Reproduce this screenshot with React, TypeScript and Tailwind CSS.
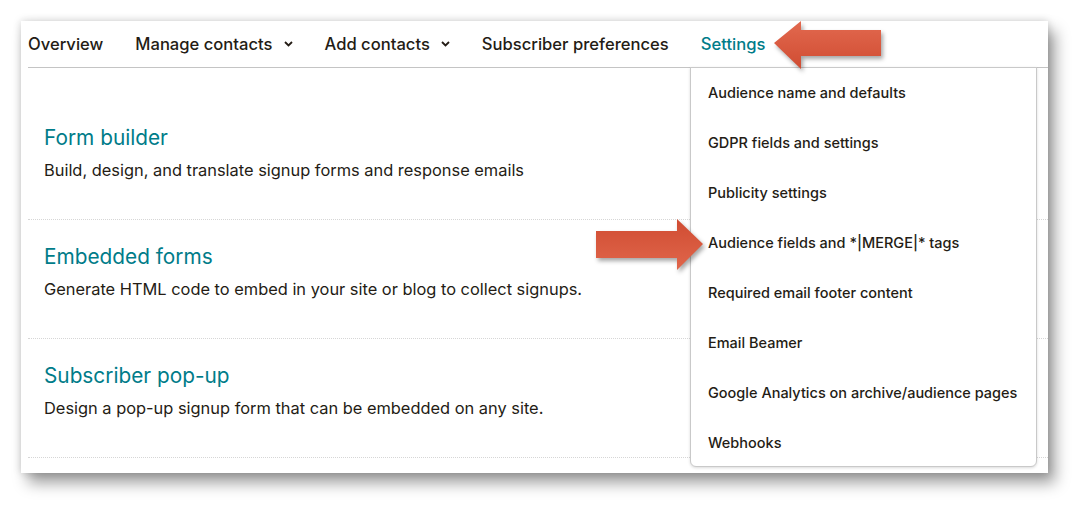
import React from 'react'

const font = { fontFamily: 'Inter, "Noto Sans", sans-serif' }

const menu = [
  'Audience name and defaults',
  'GDPR fields and settings',
  'Publicity settings',
  'Audience fields and *|MERGE|* tags',
  'Required email footer content',
  'Email Beamer',
  'Google Analytics on archive/audience pages',
  'Webhooks',
]

const sections = [
  {
    title: 'Form builder',
    text: 'Build, design, and translate signup forms and response emails',
  },
  {
    title: 'Embedded forms',
    text: 'Generate HTML code to embed in your site or blog to collect signups.',
  },
  {
    title: 'Subscriber pop-up',
    text: 'Design a pop-up signup form that can be embedded on any site.',
  },
]

function Chevron() {
  return (
    <svg width="9" height="6" viewBox="0 0 9 6" className="ml-[11px] mt-[1px]">
      <path d="M1 1l3.5 3.5L8 1" fill="none" stroke="#241c15" strokeWidth="1.8" />
    </svg>
  )
}

function LeftArrow() {
  return (
    <svg
      width="112"
      height="54"
      viewBox="0 0 112 54"
      className="absolute left-[753px] top-0 drop-shadow-[2px_3px_2px_rgba(0,0,0,0.35)]"
    >
      <defs>
        <linearGradient id="ga" x1="0" y1="0" x2="0" y2="1">
          <stop offset="0" stopColor="#e2694f" />
          <stop offset="1" stopColor="#d04c32" />
        </linearGradient>
      </defs>
      <polygon points="0,22 27,0 27,9 107,9 107,35 27,35 27,48" fill="url(#ga)" />
    </svg>
  )
}

function RightArrow() {
  return (
    <svg
      width="112"
      height="56"
      viewBox="0 0 112 56"
      className="absolute left-[575px] top-[198px] drop-shadow-[2px_3px_2px_rgba(0,0,0,0.35)]"
    >
      <defs>
        <linearGradient id="gb" x1="0" y1="0" x2="0" y2="1">
          <stop offset="0" stopColor="#d04c32" />
          <stop offset="1" stopColor="#e0664b" />
        </linearGradient>
      </defs>
      <polygon points="0,12 81,12 81,0 107,25 81,51 81,39 0,39" fill="url(#gb)" />
    </svg>
  )
}

export default function App() {
  return (
    <div className="w-[1090px] h-[516px] bg-white pl-[21px] pt-[21px]" style={font}>
      <div className="relative w-[1027px] h-[452px] bg-white shadow-[0_0_8px_rgba(0,0,0,0.18),7px_10px_14px_rgba(0,0,0,0.38)]">
        <nav className="ml-[7px] h-[47px] flex items-center gap-[32px] border-b border-[#c4c4c4] text-[16.6px] font-medium text-[#241c15]">
          <span>Overview</span>
          <span className="flex items-center">
            Manage contacts
            <Chevron />
          </span>
          <span className="flex items-center">
            Add contacts
            <Chevron />
          </span>
          <span>Subscriber preferences</span>
          <span className="text-[#007c89]">Settings</span>
        </nav>

        <div className="ml-[7px] pt-[33px]">
          {sections.map((s) => (
            <div key={s.title} className="pl-[16px] pt-[23px] pb-[37px] border-b border-dotted border-[#d6d6d6]">
              <h2 className="text-[20.8px] leading-[28px] text-[#007c89]">{s.title}</h2>
              <p className="mt-[6px] text-[16.4px] leading-[24px] text-[#241c15]">{s.text}</p>
            </div>
          ))}
        </div>

        <div className="absolute left-[669px] top-[46px] w-[347px] h-[400px] bg-white border border-[#c9c9c9] rounded-b-[6px] shadow-[0_1px_3px_rgba(0,0,0,0.15)]">
          {menu.map((m) => (
            <div key={m} className="h-[50px] flex items-center pl-[17px] pb-[1px] text-[14.5px] font-medium text-[#241c15]">
              {m}
            </div>
          ))}
        </div>

        <LeftArrow />
        <RightArrow />
      </div>
    </div>
  )
}
